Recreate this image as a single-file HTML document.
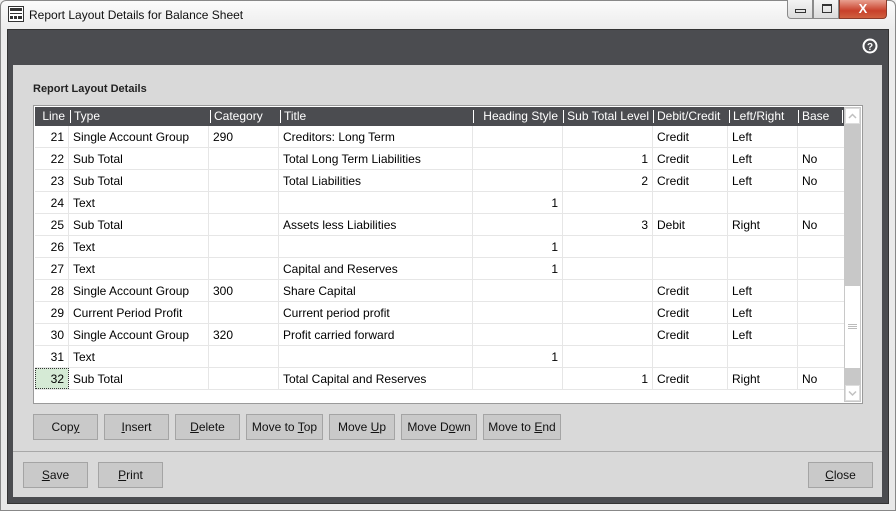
<!DOCTYPE html>
<html><head><style>
*{margin:0;padding:0;box-sizing:border-box}
body{width:896px;height:511px;overflow:hidden;background:#f0f0f0;font-family:"Liberation Sans",Arial,sans-serif;font-size:12px;color:#000;position:relative}
.a{position:absolute}
.btn{position:absolute;background:#c9c9c9;border:1px solid #a4a4a4;text-align:center;line-height:25px;font-size:12px;color:#111}
.hd{position:absolute;top:0;height:19px;line-height:18px;color:#fff;font-size:12px;padding:0 4px;white-space:nowrap}
.sep{position:absolute;top:3px;width:1px;height:13px;background:#fff}
.row{position:absolute;left:0;width:809px;height:22px;border-bottom:1px solid #e6e6e6}
.c{position:absolute;top:0;height:21px;line-height:23px;padding:0 4px;white-space:nowrap;border-right:1px solid #e6e6e6}
.r{text-align:right}
u{text-decoration:underline}
</style></head><body>
<div class="a" style="left:0;top:0;width:896px;height:511px;border:1px solid #888;border-radius:6px 6px 0 0;background:linear-gradient(#fbfbfb,#ececec 28px,#e8e8e8)"></div>
<svg class="a" style="left:8px;top:6px" width="16" height="16" viewBox="0 0 16 16"><rect x="0.5" y="0.5" width="15" height="15" fill="#fff" stroke="#333"/><rect x="2" y="2" width="12" height="3" fill="#333"/><rect x="2" y="7" width="12" height="1" fill="#333"/><rect x="2" y="10" width="3" height="3" fill="#333"/><rect x="6" y="10" width="3" height="3" fill="#333"/><rect x="10" y="10" width="4" height="3" fill="#333"/></svg>
<div class="a" style="left:29px;top:8px;font-size:12px;color:#111">Report Layout Details for Balance Sheet</div>
<div class="a" style="left:787px;top:0;width:26px;height:19px;border:1px solid #8a8a8a;border-top:none;border-radius:0 0 0 4px;background:linear-gradient(#f4f4f4,#dcdcdc)"><div class="a" style="left:7px;top:9px;width:11px;height:4px;border:1px solid #333"></div></div>
<div class="a" style="left:813px;top:0;width:26px;height:19px;border:1px solid #8a8a8a;border-top:none;background:linear-gradient(#f4f4f4,#dcdcdc)"><div class="a" style="left:8px;top:4px;width:10px;height:9px;border:1px solid #333;border-top-width:2px"></div></div>
<div class="a" style="left:839px;top:0;width:48px;height:19px;border:1px solid #8a3a2a;border-top:none;border-radius:0 0 4px 0;background:linear-gradient(#e8a090,#c8402a 60%,#d06040);color:#fff;font-weight:bold;text-align:center;line-height:18px;font-size:13px">X</div>
<div class="a" style="left:7px;top:29px;width:882px;height:475px;background:#4b4c50;border:1px solid #333"></div>
<svg class="a" style="left:862px;top:38px" width="16" height="16" viewBox="0 0 16 16"><circle cx="8" cy="8" r="6.5" fill="none" stroke="#fff" stroke-width="2"/><text x="8" y="12" font-family="Liberation Sans" font-weight="bold" font-size="10" fill="#fff" text-anchor="middle">?</text></svg>
<div class="a" style="left:13px;top:65px;width:869px;height:432px;background:#d9d9d9"></div>
<div class="a" style="left:13px;top:451px;width:869px;height:1px;background:#a8a8a8"></div>
<div class="a" style="left:33px;top:83px;font-weight:bold;font-size:11px;color:#222">Report Layout Details</div>
<div class="a" style="left:33px;top:105px;width:830px;height:299px;border:1px solid #9a9a9a;background:#fff"></div>
<div class="a" style="left:35px;top:107px;width:809px;height:19px;background:#4b4c50">
<div class="hd r" style="left:0;width:34px">Line</div><div class="sep" style="left:35px"></div>
<div class="hd" style="left:35px">Type</div><div class="sep" style="left:175px"></div>
<div class="hd" style="left:175px">Category</div><div class="sep" style="left:245px"></div>
<div class="hd" style="left:245px">Title</div><div class="sep" style="left:438px"></div>
<div class="hd r" style="left:438px;width:89px">Heading Style</div><div class="sep" style="left:528px"></div>
<div class="hd r" style="left:528px;width:90px">Sub Total Level</div><div class="sep" style="left:618px"></div>
<div class="hd" style="left:618px">Debit/Credit</div><div class="sep" style="left:694px"></div>
<div class="hd" style="left:694px">Left/Right</div><div class="sep" style="left:763px"></div>
<div class="hd" style="left:763px">Base</div><div class="sep" style="left:807px"></div>
</div>
<div class="a" style="left:35px;top:126px;width:809px;height:264px">
<div class="row" style="top:0"><div class="c r" style="left:0;width:34px">21</div><div class="c" style="left:34px;width:140px">Single Account Group</div><div class="c" style="left:174px;width:70px">290</div><div class="c" style="left:244px;width:194px">Creditors: Long Term</div><div class="c r" style="left:438px;width:90px"></div><div class="c r" style="left:528px;width:90px"></div><div class="c" style="left:618px;width:75px">Credit</div><div class="c" style="left:693px;width:70px">Left</div><div class="c" style="left:763px;width:46px;border:none"></div></div>
<div class="row" style="top:22px"><div class="c r" style="left:0;width:34px">22</div><div class="c" style="left:34px;width:140px">Sub Total</div><div class="c" style="left:174px;width:70px"></div><div class="c" style="left:244px;width:194px">Total Long Term Liabilities</div><div class="c r" style="left:438px;width:90px"></div><div class="c r" style="left:528px;width:90px">1</div><div class="c" style="left:618px;width:75px">Credit</div><div class="c" style="left:693px;width:70px">Left</div><div class="c" style="left:763px;width:46px;border:none">No</div></div>
<div class="row" style="top:44px"><div class="c r" style="left:0;width:34px">23</div><div class="c" style="left:34px;width:140px">Sub Total</div><div class="c" style="left:174px;width:70px"></div><div class="c" style="left:244px;width:194px">Total Liabilities</div><div class="c r" style="left:438px;width:90px"></div><div class="c r" style="left:528px;width:90px">2</div><div class="c" style="left:618px;width:75px">Credit</div><div class="c" style="left:693px;width:70px">Left</div><div class="c" style="left:763px;width:46px;border:none">No</div></div>
<div class="row" style="top:66px"><div class="c r" style="left:0;width:34px">24</div><div class="c" style="left:34px;width:140px">Text</div><div class="c" style="left:174px;width:70px"></div><div class="c" style="left:244px;width:194px"></div><div class="c r" style="left:438px;width:90px">1</div><div class="c r" style="left:528px;width:90px"></div><div class="c" style="left:618px;width:75px"></div><div class="c" style="left:693px;width:70px"></div><div class="c" style="left:763px;width:46px;border:none"></div></div>
<div class="row" style="top:88px"><div class="c r" style="left:0;width:34px">25</div><div class="c" style="left:34px;width:140px">Sub Total</div><div class="c" style="left:174px;width:70px"></div><div class="c" style="left:244px;width:194px">Assets less Liabilities</div><div class="c r" style="left:438px;width:90px"></div><div class="c r" style="left:528px;width:90px">3</div><div class="c" style="left:618px;width:75px">Debit</div><div class="c" style="left:693px;width:70px">Right</div><div class="c" style="left:763px;width:46px;border:none">No</div></div>
<div class="row" style="top:110px"><div class="c r" style="left:0;width:34px">26</div><div class="c" style="left:34px;width:140px">Text</div><div class="c" style="left:174px;width:70px"></div><div class="c" style="left:244px;width:194px"></div><div class="c r" style="left:438px;width:90px">1</div><div class="c r" style="left:528px;width:90px"></div><div class="c" style="left:618px;width:75px"></div><div class="c" style="left:693px;width:70px"></div><div class="c" style="left:763px;width:46px;border:none"></div></div>
<div class="row" style="top:132px"><div class="c r" style="left:0;width:34px">27</div><div class="c" style="left:34px;width:140px">Text</div><div class="c" style="left:174px;width:70px"></div><div class="c" style="left:244px;width:194px">Capital and Reserves</div><div class="c r" style="left:438px;width:90px">1</div><div class="c r" style="left:528px;width:90px"></div><div class="c" style="left:618px;width:75px"></div><div class="c" style="left:693px;width:70px"></div><div class="c" style="left:763px;width:46px;border:none"></div></div>
<div class="row" style="top:154px"><div class="c r" style="left:0;width:34px">28</div><div class="c" style="left:34px;width:140px">Single Account Group</div><div class="c" style="left:174px;width:70px">300</div><div class="c" style="left:244px;width:194px">Share Capital</div><div class="c r" style="left:438px;width:90px"></div><div class="c r" style="left:528px;width:90px"></div><div class="c" style="left:618px;width:75px">Credit</div><div class="c" style="left:693px;width:70px">Left</div><div class="c" style="left:763px;width:46px;border:none"></div></div>
<div class="row" style="top:176px"><div class="c r" style="left:0;width:34px">29</div><div class="c" style="left:34px;width:140px">Current Period Profit</div><div class="c" style="left:174px;width:70px"></div><div class="c" style="left:244px;width:194px">Current period profit</div><div class="c r" style="left:438px;width:90px"></div><div class="c r" style="left:528px;width:90px"></div><div class="c" style="left:618px;width:75px">Credit</div><div class="c" style="left:693px;width:70px">Left</div><div class="c" style="left:763px;width:46px;border:none"></div></div>
<div class="row" style="top:198px"><div class="c r" style="left:0;width:34px">30</div><div class="c" style="left:34px;width:140px">Single Account Group</div><div class="c" style="left:174px;width:70px">320</div><div class="c" style="left:244px;width:194px">Profit carried forward</div><div class="c r" style="left:438px;width:90px"></div><div class="c r" style="left:528px;width:90px"></div><div class="c" style="left:618px;width:75px">Credit</div><div class="c" style="left:693px;width:70px">Left</div><div class="c" style="left:763px;width:46px;border:none"></div></div>
<div class="row" style="top:220px"><div class="c r" style="left:0;width:34px">31</div><div class="c" style="left:34px;width:140px">Text</div><div class="c" style="left:174px;width:70px"></div><div class="c" style="left:244px;width:194px"></div><div class="c r" style="left:438px;width:90px">1</div><div class="c r" style="left:528px;width:90px"></div><div class="c" style="left:618px;width:75px"></div><div class="c" style="left:693px;width:70px"></div><div class="c" style="left:763px;width:46px;border:none"></div></div>
<div class="row" style="top:242px"><div class="c r" style="left:0;width:34px;background:#d5ead5;outline:1px dotted #333;outline-offset:-1px">32</div><div class="c" style="left:34px;width:140px">Sub Total</div><div class="c" style="left:174px;width:70px"></div><div class="c" style="left:244px;width:194px">Total Capital and Reserves</div><div class="c r" style="left:438px;width:90px"></div><div class="c r" style="left:528px;width:90px">1</div><div class="c" style="left:618px;width:75px">Credit</div><div class="c" style="left:693px;width:70px">Right</div><div class="c" style="left:763px;width:46px;border:none">No</div></div>
</div>
<div class="a" style="left:844px;top:107px;width:17px;height:295px;background:#c8c8c8"></div>
<div class="a" style="left:845px;top:108px;width:15px;height:16px;background:#fff;border:1px solid #ddd"><svg width="13" height="14"><path d="M3 9 L6.5 5.5 L10 9" fill="none" stroke="#c0c0c0" stroke-width="1.5"/></svg></div>
<div class="a" style="left:845px;top:286px;width:15px;height:82px;background:#fff"></div>
<div class="a" style="left:848px;top:324px;width:9px;height:5px;border-top:1px solid #bbb;border-bottom:1px solid #bbb"><div style="margin-top:1px;height:1px;background:#bbb"></div></div>
<div class="a" style="left:845px;top:385px;width:15px;height:16px;background:#fff;border:1px solid #ddd"><svg width="13" height="14"><path d="M3 5.5 L6.5 9 L10 5.5" fill="none" stroke="#c0c0c0" stroke-width="1.5"/></svg></div>
<div class="btn" style="left:33px;top:414px;width:65px;height:26px">Cop<u>y</u></div>
<div class="btn" style="left:104px;top:414px;width:65px;height:26px"><u>I</u>nsert</div>
<div class="btn" style="left:175px;top:414px;width:65px;height:26px"><u>D</u>elete</div>
<div class="btn" style="left:246px;top:414px;width:77px;height:26px">Move to <u>T</u>op</div>
<div class="btn" style="left:329px;top:414px;width:66px;height:26px">Move <u>U</u>p</div>
<div class="btn" style="left:401px;top:414px;width:76px;height:26px">Move D<u>o</u>wn</div>
<div class="btn" style="left:483px;top:414px;width:78px;height:26px">Move to <u>E</u>nd</div>
<div class="btn" style="left:23px;top:462px;width:65px;height:26px"><u>S</u>ave</div>
<div class="btn" style="left:98px;top:462px;width:65px;height:26px"><u>P</u>rint</div>
<div class="btn" style="left:808px;top:462px;width:65px;height:26px"><u>C</u>lose</div>
</body></html>
